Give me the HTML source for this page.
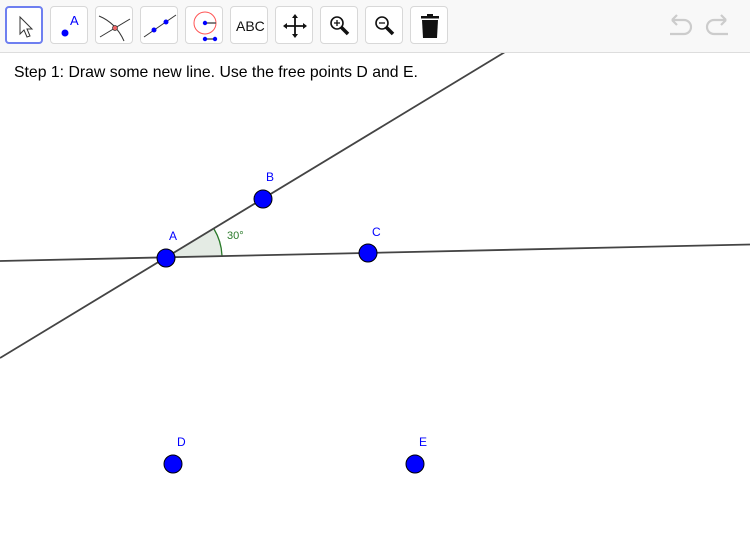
<!DOCTYPE html>
<html><head><style>
body{margin:0;width:750px;height:550px;overflow:hidden;background:#fff;font-family:"Liberation Sans",sans-serif;position:relative}
#tb{position:absolute;left:0;top:0;width:750px;height:52px;background:#f8f8f8;border-bottom:1px solid #ddd}
.b{position:absolute;top:6px;width:38px;height:38px;background:#fff;border:1px solid #d8d8d8;border-radius:4px;box-sizing:border-box}
.b svg{position:absolute;left:0;top:0}
.sel{border:2px solid #6e7ff0}
#step{position:absolute;left:14px;top:64px;font-size:15.8px;color:#000}
</style></head><body>
<svg width="750" height="550" style="position:absolute;left:0;top:0">
<path d="M166,258 L222,257 A56,56 0 0 0 214,229 Z" fill="#e4ebe4"/>
<path d="M222,257 A56,56 0 0 0 214,229" fill="none" stroke="#2a7a2a" stroke-width="1.3"/>
<line x1="0" y1="358" x2="505" y2="52" stroke="#444" stroke-width="1.8"/>
<line x1="0" y1="261" x2="750" y2="244.5" stroke="#444" stroke-width="1.8"/>
<g fill="#0000ff" stroke="#000" stroke-width="1">
<circle cx="166" cy="258" r="9"/><circle cx="263" cy="199" r="9"/><circle cx="368" cy="253" r="9"/>
<circle cx="173" cy="464" r="9"/><circle cx="415" cy="464" r="9"/></g>
<g fill="#0000ff" font-size="12" font-family="Liberation Sans,sans-serif">
<text x="169" y="240">A</text><text x="266" y="181">B</text><text x="372" y="236">C</text>
<text x="177" y="446">D</text><text x="419" y="446">E</text></g>
<text x="227" y="239" fill="#2a7a2a" font-size="11" font-family="Liberation Sans,sans-serif">30°</text>
</svg>
<div id="tb">
<div class="b sel" style="left:5px"><svg width="38" height="38"><path d="M13,9 L13,26 L17,22 L20,29 L23,28 L20,21 L25,21 Z" fill="#fff" stroke="#333" stroke-width="1"/></svg></div>
<div class="b" style="left:50px"><svg width="38" height="38"><circle cx="14" cy="26" r="3.5" fill="#0000ff"/><text x="19" y="18" fill="#0000ff" font-size="13" font-family="Liberation Sans">A</text></svg></div>
<div class="b" style="left:95px"><svg width="38" height="38"><path d="M3,9 Q20,16 28,34" fill="none" stroke="#333"/><path d="M4,30 L34,12" stroke="#333"/><circle cx="19" cy="21" r="2.5" fill="#e66" stroke="#333" stroke-width=".7"/></svg></div>
<div class="b" style="left:140px"><svg width="38" height="38"><path d="M3,30 L35,8" stroke="#333"/><circle cx="13" cy="23" r="2.5" fill="#0000ff"/><circle cx="25" cy="15" r="2.5" fill="#0000ff"/></svg></div>
<div class="b" style="left:185px"><svg width="38" height="38"><circle cx="19" cy="16" r="11" fill="none" stroke="#f55"/><path d="M19,16 H30" stroke="#555" stroke-width="1.5"/><circle cx="19" cy="16" r="2.2" fill="#0000ff"/><path d="M19,32 H29" stroke="#555" stroke-width="1.5"/><circle cx="19" cy="32" r="2.2" fill="#0000ff"/><circle cx="29" cy="32" r="2.2" fill="#0000ff"/></svg></div>
<div class="b" style="left:230px"><svg width="38" height="38"><text x="5" y="24" font-size="14" fill="#111" font-family="Liberation Sans">ABC</text></svg></div>
<div class="b" style="left:275px"><svg width="38" height="38"><path d="M10,19 H28 M19,10 V28" stroke="#111" stroke-width="1.8"/><path d="M19,7 L16,11 H22Z M19,31 L16,27 H22Z M7,19 L11,16 V22Z M31,19 L27,16 V22Z" fill="#111"/></svg></div>
<div class="b" style="left:320px"><svg width="38" height="38"><circle cx="16" cy="16" r="6" fill="none" stroke="#111" stroke-width="1.6"/><path d="M13,16 H19 M16,13 V19" stroke="#111" stroke-width="1.3"/><path d="M20,20 L27,27" stroke="#111" stroke-width="3.5"/></svg></div>
<div class="b" style="left:365px"><svg width="38" height="38"><circle cx="16" cy="16" r="6" fill="none" stroke="#111" stroke-width="1.6"/><path d="M13,16 H19" stroke="#111" stroke-width="1.3"/><path d="M20,20 L27,27" stroke="#111" stroke-width="3.5"/></svg></div>
<div class="b" style="left:410px"><svg width="38" height="38"><rect x="10" y="9" width="18" height="2.5" fill="#111"/><rect x="16" y="7" width="6" height="3" fill="#111"/><path d="M11,13 H27 L26,31 H12 Z" fill="#111"/></svg></div>
<svg width="80" height="40" style="position:absolute;left:660px;top:6px"><path d="M12,14 H24 A7,7 0 0 1 24,28 H10 M12,14 L17,9 M12,14 L17,19" fill="none" stroke="#ccc" stroke-width="2.2"/><path d="M66,14 H54 A7,7 0 0 0 54,28 H68 M66,14 L61,9 M66,14 L61,19" fill="none" stroke="#ccc" stroke-width="2.2"/></svg>
</div>
<div id="step">Step 1: Draw some new line. Use the free points D and E.</div>
</body></html>
